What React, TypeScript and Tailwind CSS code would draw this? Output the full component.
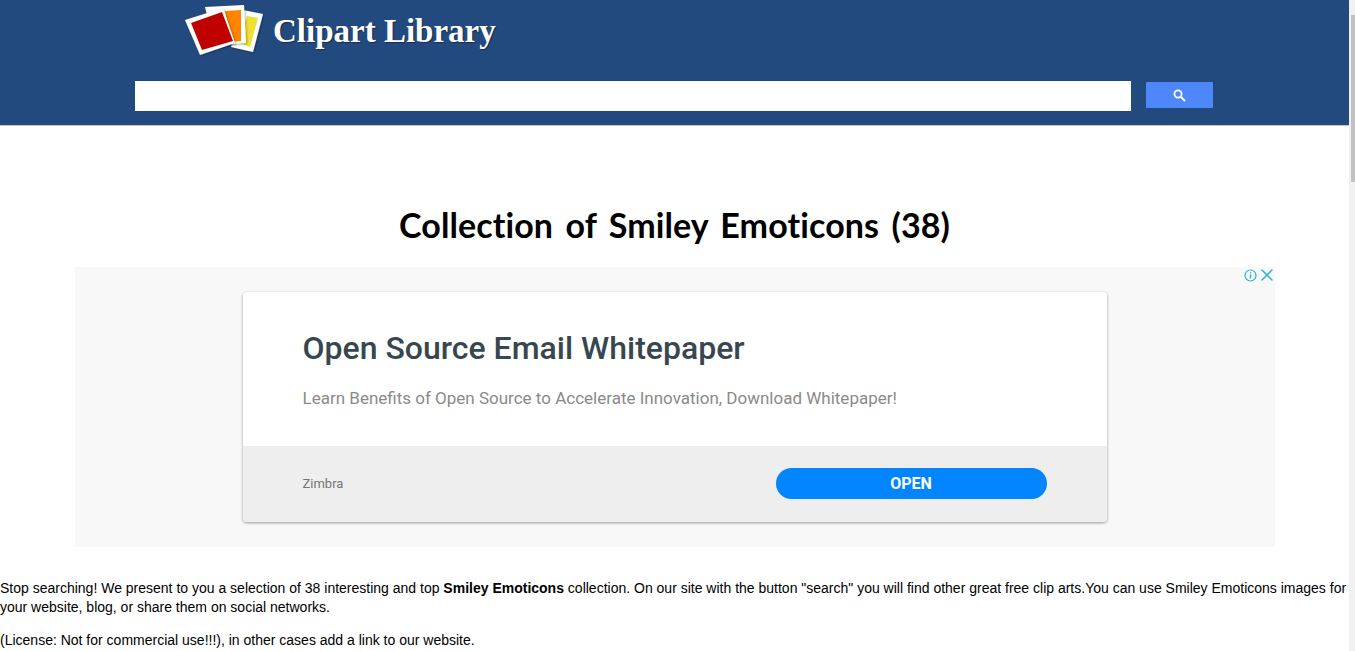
import { X } from 'lucide-react';

function Logo() {
  return (
    <svg width="80" height="56" viewBox="0 0 80 56" className="shrink-0">
      <defs>
        <filter id="s" x="-10%" y="-10%" width="120%" height="120%">
          <feDropShadow dx="1" dy="1" stdDeviation="1" floodOpacity="0.35" />
        </filter>
      </defs>
      <g filter="url(#s)">
        <polygon points="58,8 78,12 68,50 46,45" fill="#fff" />
        <polygon points="62,14 73,16 65,45 54,41" fill="#f0e030" />
      </g>
      <g filter="url(#s)">
        <polygon points="20,5 59,3 61,41 30,43" fill="#fff" />
        <polygon points="40,9 56,8 56,39 46,40" fill="#ff8400" />
      </g>
      <g filter="url(#s)">
        <polygon points="0,18 38,6 50,41 15,53" fill="#fff" />
        <polygon points="6,21 37,10 48,39 17,48" fill="#c00000" />
      </g>
    </svg>
  );
}

function SearchBar() {
  return (
    <div className="flex items-start pl-[135px]">
      <div className="h-[30px] w-[996px] bg-white" />
      <button className="mt-[1px] ml-[15px] flex h-[26px] w-[67px] items-center justify-center rounded-[1px] bg-[#4d87fa]">
        <svg width="13" height="13" viewBox="0 0 13 13" fill="none" stroke="#fff">
          <circle cx="5" cy="5" r="3.6" strokeWidth="1.8" />
          <path d="M8 8l4 4" strokeWidth="2" />
        </svg>
      </button>
    </div>
  );
}

function AdCard() {
  return (
    <div className="mx-auto flex h-[230px] w-[864px] flex-col overflow-hidden rounded-[4px] bg-white shadow-[0_1px_3px_rgba(0,0,0,0.4)]">
      <div className="h-[154px] px-[60px] pt-[35px] font-['Roboto',sans-serif]">
        <div className="text-[32px] leading-[42px] font-medium text-[#37474f]">
          Open Source Email Whitepaper
        </div>
        <div className="mt-[17px] text-[17px] leading-[24px] text-[#8a8a8a]">
          Learn Benefits of Open Source to Accelerate Innovation, Download Whitepaper!
        </div>
      </div>
      <div className="flex flex-1 items-center justify-between bg-[#eeeeee] pr-[60px] pb-[2px] pl-[60px] font-['Roboto',sans-serif]">
        <span className="mt-[2px] text-[13px] text-[#757575]">Zimbra</span>
        <button className="h-[31px] w-[271px] rounded-full bg-[#0285ff] pt-[1px] text-[16px] font-bold text-white">
          OPEN
        </button>
      </div>
    </div>
  );
}

export default function App() {
  return (
    <div className="flex h-[651px] overflow-hidden bg-white font-['Liberation_Sans',Arial,sans-serif]">
      <div className="w-[1349px] shrink-0">
        <header className="h-[126px] border-b border-[#c4c0cc] bg-[#234a7f]">
          <div className="flex h-[81px] items-start pl-[185px] pt-[2px]">
            <Logo />
            <span className="mt-[8px] ml-[8px] font-['Liberation_Serif',serif] text-[33px] leading-[42px] font-bold text-white [text-shadow:1px_1px_1px_rgba(0,0,0,0.4)]">
              Clipart Library
            </span>
          </div>
          <SearchBar />
        </header>

        <h1 className="mt-[75px] text-center font-['Lato',sans-serif] text-[34px] leading-[48px] font-bold tracking-[0.1px] text-black [word-spacing:4px]">
          Collection of Smiley Emoticons (38)
        </h1>

        <div className="relative mx-auto mt-[18px] h-[280px] w-[1200px] bg-[#f8f8f8] pt-[25px]">
          <div className="absolute top-[-2px] right-[-2px] flex items-center text-[#27b4d6]">
            <svg width="13" height="13" viewBox="0 0 13 13" fill="none" stroke="currentColor">
              <circle cx="6.5" cy="6.5" r="5.5" strokeWidth="1.2" />
              <path d="M6.5 5.5v4M6.5 3.2v1.2" strokeWidth="1.4" />
            </svg>
            <X size={20} strokeWidth={1.8} />
          </div>
          <AdCard />
        </div>

        <p className="mt-[32px] text-[14px] leading-[19px] text-black">
          Stop searching! We present to you a selection of 38 interesting and top{' '}
          <strong>Smiley Emoticons</strong> collection. On our site with the button "search" you will
          find other great free clip arts.You can use Smiley Emoticons images for your website, blog,
          or share them on social networks.
        </p>
        <p className="mt-[14px] text-[14px] leading-[19px] text-black">
          (License: Not for commercial use!!!), in other cases add a link to our website.
        </p>
      </div>

      <div className="relative flex-1 bg-[#f1f1f1]">
        <div className="absolute top-[15px] left-[2px] h-[167px] w-[4px] bg-[#c1c1c1]" />
      </div>
    </div>
  );
}
